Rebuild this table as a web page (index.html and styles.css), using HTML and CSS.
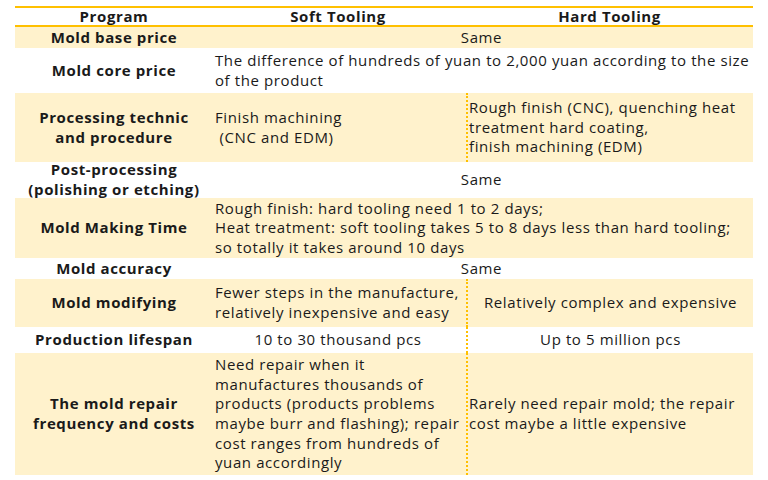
FILE: index.html
```html
<!DOCTYPE html>
<html>
<head>
<meta charset="utf-8">
<link rel="stylesheet" href="styles.css">
</head>
<body>
<div class="page">
  <div class="sheet">
    <div class="cell hd c1">Program</div>
    <div class="cell hd center">Soft Tooling</div>
    <div class="cell hd center">Hard Tooling</div>

    <div class="cell c1 tan">Mold base price</div>
    <div class="cell span center tan">Same</div>

    <div class="cell c1">Mold core price</div>
    <div class="cell span left">The difference of hundreds of yuan to 2,000 yuan according to the size<br>of the product</div>

    <div class="cell c1 tan">Processing technic<br>and procedure</div>
    <div class="cell left tan">Finish machining<br>&nbsp;(CNC and EDM)</div>
    <div class="cell right-left tan dot">Rough finish (CNC), quenching heat<br>treatment hard coating,<br>finish machining (EDM)</div>

    <div class="cell c1">Post-processing<br>(polishing or etching)</div>
    <div class="cell span center">Same</div>

    <div class="cell c1 tan">Mold Making Time</div>
    <div class="cell span left tan">Rough finish: hard tooling need 1 to 2 days;<br>Heat treatment: soft tooling takes 5 to 8 days less than hard tooling;<br>so totally it takes around 10 days</div>

    <div class="cell c1">Mold accuracy</div>
    <div class="cell span center">Same</div>

    <div class="cell c1 tan">Mold modifying</div>
    <div class="cell left tan">Fewer steps in the manufacture,<br>relatively inexpensive and easy</div>
    <div class="cell center tan dot">Relatively complex and expensive</div>

    <div class="cell c1">Production lifespan</div>
    <div class="cell center">10 to 30 thousand pcs</div>
    <div class="cell center dot">Up to 5 million pcs</div>

    <div class="cell c1 tan">The mold repair<br>frequency and costs</div>
    <div class="cell left tan">Need repair when it<br>manufactures thousands of<br>products (products problems<br>maybe burr and flashing); repair<br>cost ranges from hundreds of<br>yuan accordingly</div>
    <div class="cell right-left tan dot">Rarely need repair mold; the repair<br>cost maybe a little expensive</div>
  </div>
</div>
</body>
</html>
```

FILE: styles.css
```css
html, body {
  margin: 0;
  padding: 0;
  background: #ffffff;
}

.page {
  padding: 6px 15px 0 15px;
}

.sheet {
  width: 738px;
  display: grid;
  grid-template-columns: 195px 256px 287px;
  grid-template-rows: 19px 21px 45px 69px 36px 60px 21px 48px 26px 122px;
  border-top: 2px solid #ffc000;
  font-family: "Open Sans", "Noto Sans", sans-serif;
  font-size: 15px;
  letter-spacing: 0.6px;
  line-height: 19.6px;
  color: #1a1a1a;
}

.cell {
  box-sizing: border-box;
  display: flex;
  flex-direction: column;
  justify-content: center;
  white-space: nowrap;
  min-width: 0;
}

.hd {
  font-weight: 700;
  border-bottom: 2px solid #ffc000;
  line-height: 17px;
  text-align: center;
}

.c1 {
  font-weight: 700;
  text-align: center;
  padding-left: 3px;
}

.span {
  grid-column: span 2;
}

.center {
  text-align: center;
}

.left {
  text-align: left;
  padding-left: 5px;
}

.right-left {
  text-align: left;
  padding-left: 1px;
}

.tan {
  background: #fff2cc;
}

.dot {
  border-left: 2px dotted #ffc000;
}
```
